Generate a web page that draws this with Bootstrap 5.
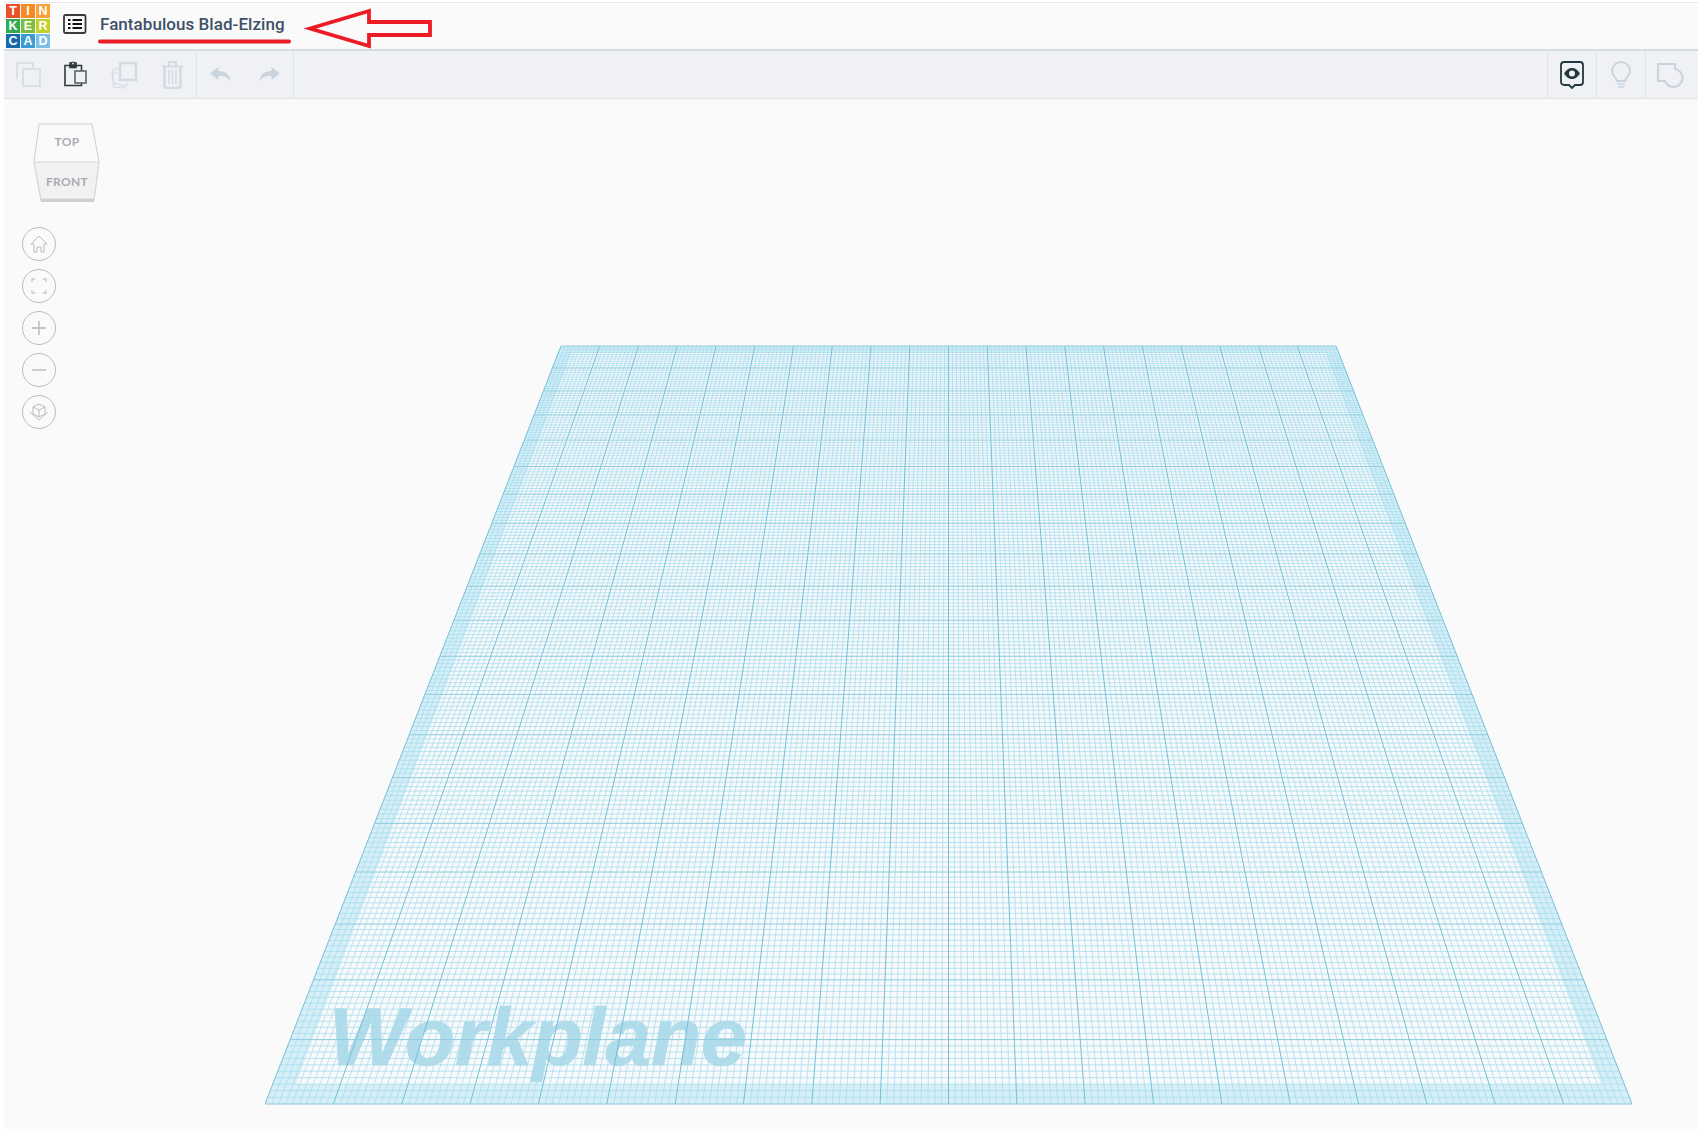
<!DOCTYPE html>
<html lang="en">
<head>
<meta charset="UTF-8">
<title>Tinkercad</title>
<link href="https://cdn.jsdelivr.net/npm/bootstrap@5.3.0/dist/css/bootstrap.min.css" rel="stylesheet">
<style>
    html, body { height: 100%; }
    body { background: #fff; padding: 2px 0 0 4px; overflow: hidden; font-family: "Roboto", sans-serif; }
    .editor-head { height: 49px; background: #fafafa; border-top: 1px solid #e8e8ea; border-bottom: 2px solid #d5dbe5; position: relative; padding-bottom: 4px; }
    .tile-logo { display: grid; grid-template-columns: repeat(3, 14px); grid-auto-rows: 14px; gap: 1px; margin: 1px 0 0 2px; }
    .tile-logo span { color: #fff; font: 700 12.500px/14px "Liberation Sans", sans-serif; text-align: center; }
    .design-title { font: 500 17px "Roboto", sans-serif; color: #3d5168; letter-spacing: .05px; margin-left: 13px; }
    .list-btn { margin-left: 13px; }
    .annot { position: absolute; left: -4px; top: -3px; pointer-events: none; }
    .tool-strip { height: 48px; background: #f0f1f4; border-bottom: 1px solid #dfe3e9; }
    .tool-cell { height: 100%; display: flex; align-items: center; justify-content: center; width: 48px; }
    .tool-group { border-right: 1px solid #dfe3e9; height: 100%; display: flex; }
    .tool-right { width: 49px; border-left: 1px solid #dfe3e9; }
    .stage { height: 1030px; background: #fafafa; }
    .left-rail { width: 261px; padding: 24px 0 0 14px; flex: none; }
    .view-cube { margin: 0 0 22px 15px; }
    .nav-circle { width: 34px; height: 34px; border: 1px solid #bcbcbc; border-radius: 50%; background: #fafafa; display: flex; align-items: center; justify-content: center; margin: 0 0 8px 4px; }
    .cube-label { font: 700 12px "Lato", sans-serif; fill: #a9abb2; letter-spacing: .3px; }
    .plane-svg { flex: none; margin-top: 1px; }
    .plane-word { font: italic 700 82px "Liberation Sans", sans-serif; fill: #b3dcea; stroke: #b3dcea; stroke-width: .7px; }
</style>
</head>
<body>
<header class="editor-head d-flex align-items-center">
    <div class="tile-logo align-self-start">
        <span style="background:#e8512a">T</span><span style="background:#f58a25">I</span><span style="background:#f7a13a">N</span>
        <span style="background:#35a853">K</span><span style="background:#7cbf3b">E</span><span style="background:#c3cf2d">R</span>
        <span style="background:#1669ad">C</span><span style="background:#3a9ad4">A</span><span style="background:#7cc0e6">D</span>
    </div>
    <div class="list-btn d-flex">
        <svg width="24" height="20" viewBox="0 0 24 20"><rect x="1" y="1" width="21.500" height="18" rx="1.500" fill="#fafafa" stroke="#3a3a3a" stroke-width="1.800"/><path d="M5 6h2.500M9.500 6h9.500M5 10h2.500M9.500 10h9.500M5 14h2.500M9.500 14h9.500" stroke="#111" stroke-width="2"/></svg>
    </div>
    <div class="design-title">Fantabulous Blad-Elzing</div>
    <svg class="annot" width="450" height="50" viewBox="0 0 450 50">
        <path d="M100 41.500H289" stroke="#ed1c24" stroke-width="4" stroke-linecap="round" fill="none"/>
        <path d="M310 28.500L369 11V22H430V35H369V46Z" fill="none" stroke="#ed1c24" stroke-width="3.800"/>
    </svg>
</header>

<div class="tool-strip d-flex">
    <div class="tool-group">
        <div class="tool-cell"><svg width="25" height="25" viewBox="0 0 25 25" fill="none" stroke="#d3dbe4" stroke-width="1.600"><path d="M1 17V1h16v5"/><rect x="7" y="7" width="17" height="17"/></svg></div>
        <div class="tool-cell"><svg width="24" height="27" viewBox="0 0 24 27" fill="none" stroke="#2f3a3e" stroke-width="1.600"><path d="M12 4.500h5.500v20H1V4.500h5"/><rect x="6" y="2" width="6" height="4.500" fill="#2f3a3e"/><circle cx="9" cy="2.500" r="1.500" fill="#f0f1f4" stroke-width="1.200"/><rect x="11" y="10" width="11" height="12" fill="#f0f1f4" stroke="#5a6468"/></svg></div>
        <div class="tool-cell"><svg width="28" height="28" viewBox="0 0 28 28" fill="none" stroke="#d3dbe4"><rect x="10" y="2" width="16" height="17" stroke-width="2.600"/><path d="M8 7L3 9v13l13 3 2-3M8 12H2l2 14 12 1" stroke-width="1.200"/></svg></div>
        <div class="tool-cell"><svg width="23" height="29" viewBox="0 0 23 29" fill="none" stroke="#d3dbe4" stroke-width="2.200"><path d="M1 6.500h21M8 6V2h7v4"/><path d="M3.500 7v19a2 2 0 0 0 2 2h12a2 2 0 0 0 2-2V7" stroke-width="2.600"/><path d="M8 10v14M11.500 10v14M15 10v14" stroke-width="1.400"/></svg></div>
    </div>
    <div class="tool-group">
        <div class="tool-cell"><svg width="22" height="16" viewBox="0 0 22 16"><path d="M8.500 0L0 6.500 8.500 13V9c5-.5 9 .5 12 5.500C20 8 16 4 8.500 4z" fill="#c9d4df"/></svg></div>
        <div class="tool-cell"><svg width="22" height="16" viewBox="0 0 22 16"><path d="M13.500 0L22 6.500 13.500 13V9c-5-.5-9 .5-12 5.500C2 8 6 4 13.500 4z" fill="#c9d4df"/></svg></div>
    </div>
    <div class="ms-auto d-flex h-100 pe-1">
        <div class="tool-cell tool-right"><svg width="24" height="28" viewBox="0 0 24 28"><path d="M4 1h16a3 3 0 0 1 3 3v17a3 3 0 0 1-3 3h-5l-3 3-3-3H4a3 3 0 0 1-3-3V4a3 3 0 0 1 3-3z" fill="none" stroke="#24383f" stroke-width="1.800"/><path d="M4 12.500C7 8 9.500 7 12 7s5 1 8 5.500c-3 4.500-5.500 5.500-8 5.500s-5-1-8-5.500z" fill="#24383f"/><circle cx="12" cy="12.500" r="3" fill="#f0f1f4"/></svg></div>
        <div class="tool-cell tool-right"><svg width="20" height="28" viewBox="0 0 20 28" fill="none" stroke="#c9d4df" stroke-width="2"><path d="M6 20c0-3-5-5-5-10a9 9 0 0 1 18 0c0 5-5 7-5 10z"/><path d="M6 23h8M7 26h6" stroke-width="1.500"/></svg></div>
        <div class="tool-cell tool-right"><svg width="27" height="26" viewBox="0 0 27 26" fill="none" stroke="#c9d4df" stroke-width="2.200"><path d="M1 2h17v5a9 9 0 1 1-9 14 9 9 0 0 1-1-2H1z"/></svg></div>
    </div>
</div>

<main class="stage d-flex">
    <div class="left-rail">
        <svg width="70" height="82" viewBox="0 0 70 82" class="d-block view-cube">
            <path d="M6 1H59L66 39 61 78H8L1 39Z" fill="#fafafa" stroke="#cfcfd2"/>
            <path d="M1 39H66L61 76H8Z" fill="#f1f1f2" stroke="#d8d8da"/>
            <path d="M8 76H61V79H8Z" fill="#cfcfd2"/>
            <text x="34" y="23" text-anchor="middle" class="cube-label">TOP</text>
            <text x="34" y="63" text-anchor="middle" class="cube-label">FRONT</text>
        </svg>
        <div class="nav-circle"><svg width="18" height="18" viewBox="0 0 18 18" fill="none" stroke="#bcbcbc"><path d="M1 9L9 1l8 8h-3v8h-3v-5H7v5H4V9z"/></svg></div>
        <div class="nav-circle"><svg width="18" height="18" viewBox="0 0 18 18" fill="none" stroke="#c8c8c8" stroke-width="1.300"><path d="M2 5V2h3M13 2h3v3M16 13v3h-3M5 16H2v-3"/></svg></div>
        <div class="nav-circle"><svg width="18" height="18" viewBox="0 0 18 18" fill="none" stroke="#b5b5b5" stroke-width="1.300"><path d="M9 2v14M2 9h14"/></svg></div>
        <div class="nav-circle"><svg width="18" height="18" viewBox="0 0 18 18" fill="none" stroke="#b5b5b5" stroke-width="1.300"><path d="M2 9h14"/></svg></div>
        <div class="nav-circle"><svg width="20" height="20" viewBox="0 0 20 20" fill="none" stroke="#bcbcbc"><path d="M10 2l6 3v7l-6 3-6-3V5zM4 5l6 3 6-3M10 8v7M1 10l9 8 9-8"/></svg></div>
    </div>
    <svg id="plane" class="plane-svg" width="1433" height="1029" viewBox="265 100 1433 1029"></svg>
</main>

<script>
    // workplane grid: 20 x 20 major cells, 10 minor per cell, in perspective
    const topY = 346, botY = 1104, topL = 561, topR = 1336, botL = 265, botR = 1632;
    const topW = topR - topL, botW = botR - botL;
    const svgNs = 'http://www.w3.org/2000/svg';
    const plane = document.getElementById('plane');

    // s = 0 at the near edge, 1 at the far edge
    function rowY(s) {
        const w = 1 / (1 / botW + s * (1 / topW - 1 / botW));
        return botY - (botW - w) / (botW - topW) * (botY - topY);
    }
    function px(u, s) {
        const y = rowY(s);
        const f = (y - topY) / (botY - topY);
        const l = topL + (botL - topL) * f, r = topR + (botR - topR) * f;
        return [l + (r - l) * u, y];
    }
    function add(name, attrs, text) {
        const el = document.createElementNS(svgNs, name);
        for (const k in attrs) el.setAttribute(k, attrs[k]);
        if (text) el.textContent = text;
        plane.appendChild(el);
        return el;
    }
    function poly(a, b, c, d, fill) {
        const pts = [a, b, c, d].map(p => p.join(',')).join(' ');
        add('polygon', { points: pts, fill: fill });
    }

    poly(px(0, 0), px(1, 0), px(1, 1), px(0, 1), '#f8f9fa');
    add('text', { x: 329, y: 1065, class: 'plane-word' }, 'Workplane');

    // tinted border band
    const band = '#d6eff7', bu = 0.017, bs = 0.015;
    poly(px(0, 0), px(1, 0), px(1, bs), px(0, bs), band);
    poly(px(0, 1), px(1, 1), px(1, 1 - bs), px(0, 1 - bs), band);
    poly(px(0, bs), px(bu, bs), px(bu, 1 - bs), px(0, 1 - bs), band);
    poly(px(1, bs), px(1 - bu, bs), px(1 - bu, 1 - bs), px(1, 1 - bs), band);

    for (let i = 0; i <= 200; i++) {
        if (i % 10 === 0) continue;
        const a = px(i / 200, 0), b = px(i / 200, 1);
        add('line', { x1: a[0], y1: a[1], x2: b[0], y2: b[1], stroke: '#a5dcee', 'stroke-width': 1, 'stroke-opacity': .75 });
        const c = px(0, i / 200), d = px(1, i / 200);
        add('line', { x1: c[0], y1: c[1], x2: d[0], y2: d[1], stroke: '#a5dcee', 'stroke-width': 1, 'stroke-opacity': .75 });
    }
    for (let i = 0; i <= 20; i++) {
        const a = px(i / 20, 0), b = px(i / 20, 1);
        add('line', { x1: a[0], y1: a[1], x2: b[0], y2: b[1], stroke: '#72c0da', 'stroke-width': 1 });
        const c = px(0, i / 20), d = px(1, i / 20);
        add('line', { x1: c[0], y1: c[1], x2: d[0], y2: d[1], stroke: '#8ccbdd', 'stroke-width': 1 });
    }
</script>
<script src="https://cdn.jsdelivr.net/npm/bootstrap@5.3.0/dist/js/bootstrap.bundle.min.js"></script>
</body>
</html>
